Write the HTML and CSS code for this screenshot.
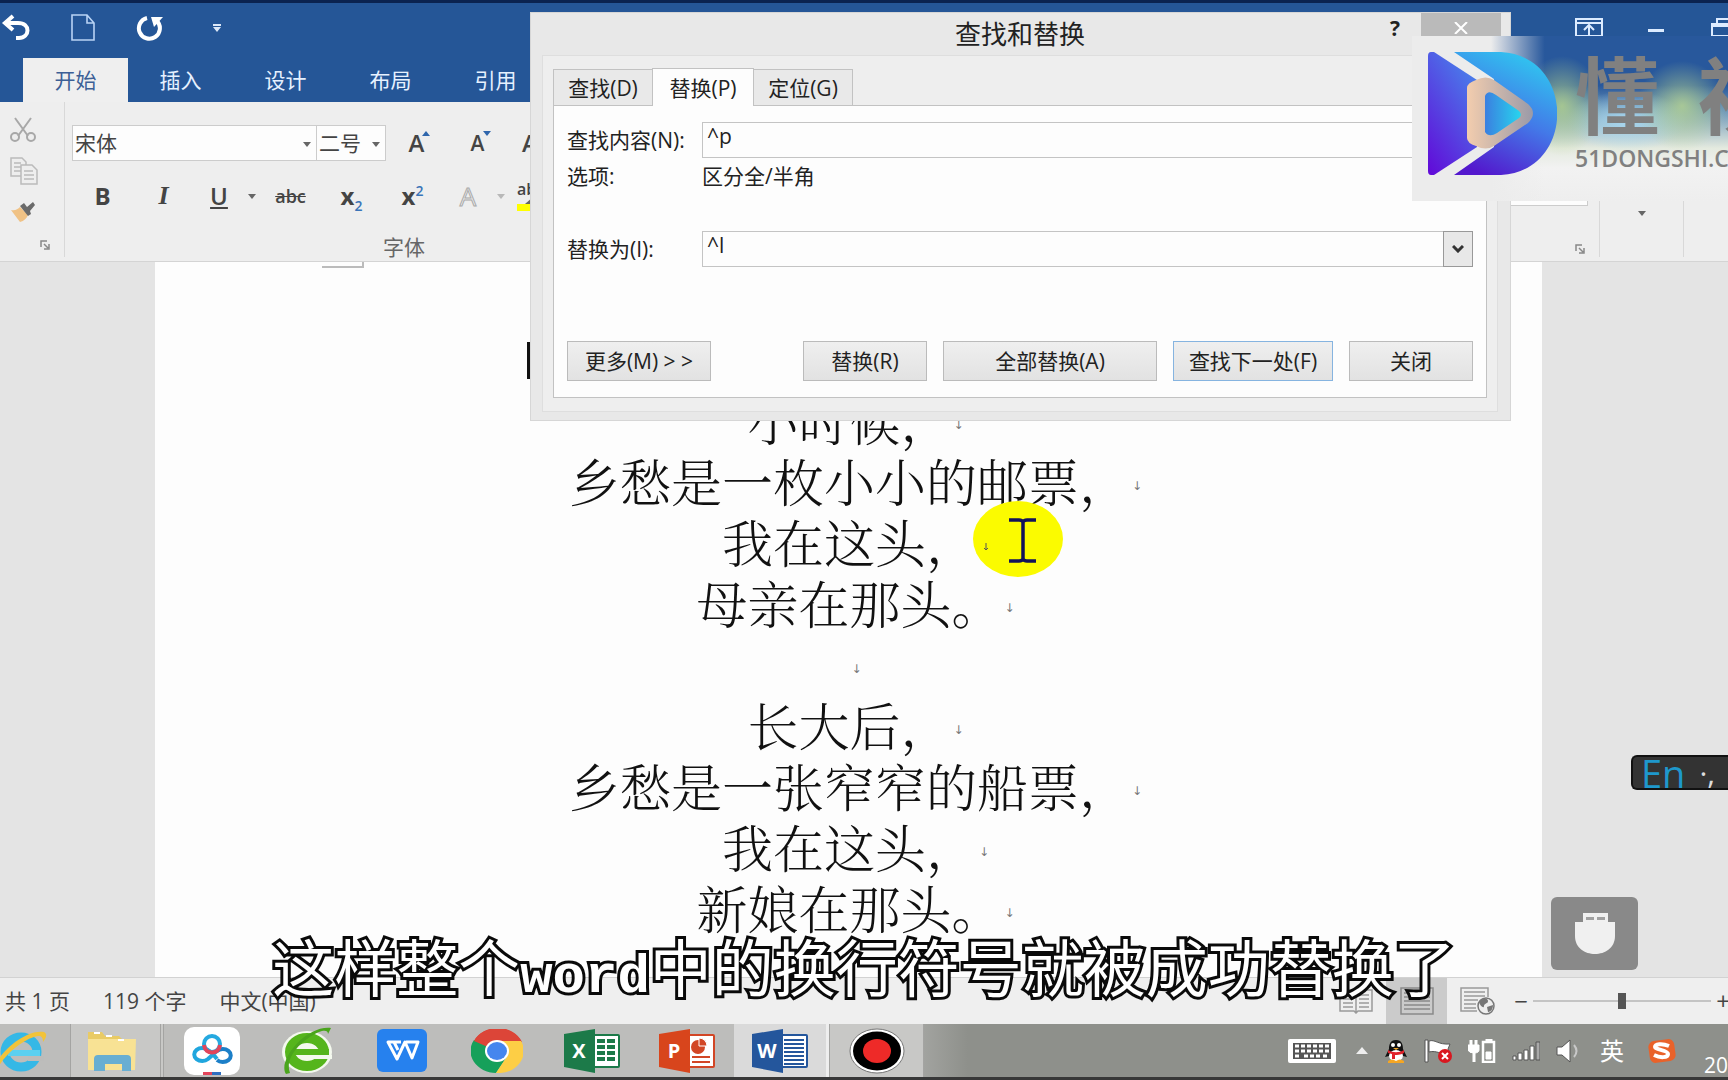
FILE: index.html
```html
<!DOCTYPE html>
<html lang="zh-CN">
<head>
  <meta charset="UTF-8" />
  <meta name="viewport" content="width=device-width, initial-scale=1" />
  <title>查找和替换</title>
  <link rel="stylesheet" href="styles.css">
</head>
<body>
  <!-- Title bar -->
  <header class="titlebar">
    <div class="quick-access">
      <button aria-label="撤消"><svg width="30" height="28" viewBox="0 0 30 28" fill="none" stroke="#fff" stroke-width="4"><path d="M12 2 4 9l8 7M4 9h13c13 0 12 15 1 15h-3"/></svg></button>
      <button aria-label="新建"><svg width="24" height="28" viewBox="0 0 24 28" fill="none" stroke="#b9d3f5" stroke-width="1.6"><path d="M1 1h15l7 8v17H1zM16 1v8h7"/></svg></button>
      <button aria-label="重复"><svg width="28" height="28" viewBox="0 0 28 28" fill="none" stroke="#fff" stroke-width="4"><path d="M11 4a10.500 10.500 0 1 0 10 3"/><path d="M15 3h12l-9 10z" fill="#fff" stroke="none"/></svg></button>
      <button aria-label="自定义"><svg width="8" height="8" viewBox="0 0 8 8" fill="#dce8f8"><path d="M0 0h8v2H0zM0 3h8L4 8z"/></svg></button>
    </div>
    <div class="window-buttons">
      <button aria-label="功能区选项"><svg width="28" height="20" viewBox="0 0 28 20" fill="none" stroke="#dcebff" stroke-width="2"><path d="M1 1h26v17H1zM1 5h26M14 18V8M9 12l5-5 5 5"/></svg></button>
      <button aria-label="最小化"><svg width="16" height="20" viewBox="0 0 16 20" fill="#dcebff"><path d="M0 11h16v3H0z"/></svg></button>
      <button aria-label="还原"><svg width="24" height="20" viewBox="0 0 24 20" fill="none" stroke="#dcebff" stroke-width="2"><path d="M6 6V1h17v11h-5M1 6h17v12H1zM1 8h17"/></svg></button>
    </div>
  </header>
  <nav class="ribbon-tabs">
    <a href="#" class="active">开始</a>
    <a href="#">插入</a>
    <a href="#">设计</a>
    <a href="#">布局</a>
    <a href="#">引用</a>
  </nav>

  <!-- Ribbon -->
  <section class="ribbon">
    <div class="group clipboard">
      <button aria-label="剪切"><svg width="26" height="26" viewBox="0 0 26 26" fill="none" stroke="#a8a8a8" stroke-width="2"><path d="M5 1l13 18M21 1 8 19"/><circle cx="5" cy="20" r="4"/><circle cx="21" cy="20" r="4"/></svg></button>
      <button aria-label="复制"><svg width="28" height="28" viewBox="0 0 28 28" fill="#eee" stroke="#bbb" stroke-width="1.500"><path d="M1 1h11l4 4v14H1zM4 6h7M4 10h7M4 14h7"/><path d="M11 8h11l5 5v14H11zM14 14h9M14 18h10M14 22h10"/></svg></button>
      <button aria-label="格式刷"><svg width="26" height="22" viewBox="0 0 26 22"><path d="M1 9c4 1 7-1 9-3l8 8c-1 3-4 6-8 7z" fill="#f0c285"/><path d="m10 5 4-3 3 4 6-5 2 3-5 6 1 3-3 2z" fill="#6a6a6a"/></svg></button>
      <svg class="launcher" width="10" height="10" viewBox="0 0 10 10" fill="none" stroke="#888" stroke-width="1.500"><path d="M1 7V1h6M4 4l4 4M9 4v5H4"/></svg>
    </div>
    <div class="group font-group">
      <div class="font-row">
        <div class="pick font-name"><select aria-label="字体"><option>宋体</option></select></div>
        <div class="pick font-size"><select aria-label="字号"><option>二号</option></select></div>
        <button class="w60 grow">A<i class="up"></i></button>
        <button class="w60 shrink">A<i class="down"></i></button>
        <button class="w50 aa">Aa</button>
      </div>
      <div class="font-row tools">
        <button class="w60"><b>B</b></button>
        <button class="w60 italic">I</button>
        <button class="w50"><u>U</u></button>
        <i class="down"></i>
        <button class="w60 strike">abc</button>
        <button class="w60"><b>x</b><sub>2</sub></button>
        <button class="w60"><b>x</b><sup>2</sup></button>
        <button class="w50 outline">A</button>
        <i class="down pale"></i>
        <button class="highlight">ab<svg width="30" height="14" viewBox="0 0 30 14"><path d="m8 7 8-7h8v7z" fill="#666"/><path d="M0 7h30v7H0z" fill="#ff0"/></svg></button>
      </div>
      <div class="group-label">字体</div>
    </div>
    <div class="group styles-group">
      <div class="style-box"></div>
      <svg class="launcher" width="10" height="10" viewBox="0 0 10 10" fill="none" stroke="#888" stroke-width="1.500"><path d="M1 7V1h6M4 4l4 4M9 4v5H4"/></svg>
    </div>
    <div class="group edit-group"><i class="down"></i></div>
  </section>

  <!-- Document -->
  <main class="workspace">
    <article class="paper">
      <div class="ruler-tab"></div>
      <p>小时候，<span>↓</span></p>
      <p>乡愁是一枚小小的邮票，<span>↓</span></p>
      <p>我在这头，<span>↓</span></p>
      <p>母亲在那头。<span>↓</span></p>
      <p><span>↓</span></p>
      <p>长大后，<span>↓</span></p>
      <p>乡愁是一张窄窄的船票，<span>↓</span></p>
      <p>我在这头，<span>↓</span></p>
      <p>新娘在那头。<span>↓</span></p>
    </article>
  </main>

  <footer class="statusbar">
    <span>共 1 页</span>
    <span>119 个字</span>
    <span>中文(中国)</span>
    <div class="views">
      <button aria-label="阅读视图"><svg width="34" height="26" viewBox="0 0 34 26" fill="none" stroke="#9a9a9a" stroke-width="1.500"><path d="M1 2h14l2 2 2-2h14v21H19l-2 2-2-2H1zM17 4v21M4 7h10M4 11h10M4 15h10M4 19h10M20 7h10M20 11h10M20 15h10M20 19h10"/></svg></button>
      <button class="current" aria-label="页面视图"><svg width="34" height="28" viewBox="0 0 34 28" fill="none" stroke="#8a8a8a" stroke-width="1.500"><path d="M1 1h32v26H1zM4 6h26M4 10h26M4 14h26M4 18h26M4 22h26"/></svg></button>
      <button aria-label="Web 视图"><svg width="36" height="28" viewBox="0 0 36 28" fill="none" stroke="#9a9a9a" stroke-width="1.500"><path d="M28 10V1H1v23h16M4 5h21M4 9h21M4 13h14M4 17h12M4 21h12"/><circle cx="26" cy="19" r="8" fill="#eee" stroke="#777"/><path d="M19 15c4-5 9-4 9-1s-4 2-4 5-4 0-5-4zM27 20l6-2c0 5-3 7-5 7z" fill="#777" stroke="none"/></svg></button>
    </div>
    <div class="zoom">
      <button aria-label="缩小">−</button>
      <input type="range" min="0" max="100" value="50" aria-label="缩放">
      <button aria-label="放大">+</button>
    </div>
  </footer>

  <!-- Taskbar -->
  <div class="taskbar">
    <button class="first" aria-label="Internet Explorer"><svg width="54" height="46" viewBox="0 0 54 46"><ellipse cx="27" cy="24" rx="16" ry="15" fill="none" stroke="#35b8e6" stroke-width="9"/><path d="M14 22h32v6H14z" fill="#5bd0f0"/><path d="M34 28h16v5H34z" fill="#bcbcba"/><path d="M2 44C-4 32 30 0 50 4c4 2 2 6-1 10 0-6-3-7-9-5C24 14 6 32 2 44z" fill="#f2c33a"/></svg></button>
    <button class="folder" aria-label="文件资源管理器"><svg width="52" height="44" viewBox="0 0 52 44"><path d="M2 3h14l3 4h14l3 3h13v30H2z" fill="#e9cb65"/><path d="M2 10h48l-1 31H2z" fill="#f8e294"/><path d="M8 4h6M20 7h6M32 11h6" stroke="#fff" stroke-width="2"/><path d="M8 42V30q0-4 4-4h29q4 0 4 4v12h-9v-7H19v7z" fill="#68aed2"/></svg></button>
    <button aria-label="百度网盘"><svg width="56" height="48" viewBox="0 0 56 48"><rect width="56" height="48" rx="10" fill="#fff"/><g fill="none" stroke-width="4"><path d="M34 23 24 32a8 6.500 0 1 1 0-9l4 3 5 6" stroke="#20a6de"/><path d="M33 24a8 6.500 0 1 1 0 9" stroke="#1c7fc8"/><circle cx="28" cy="17" r="8" stroke="#25a9e0"/><path d="M20 18c1 10 15 10 16 0" stroke="#e2455b"/></g><path d="M19 45h9v3h-9z" fill="#e2455b"/><path d="M28 45h9v3h-9z" fill="#2f6fc0"/></svg></button>
    <button aria-label="浏览器"><svg width="52" height="48" viewBox="0 0 52 48"><ellipse cx="26" cy="25" rx="25" ry="21" fill="#f4f9ee"/><ellipse cx="26" cy="25" rx="17" ry="14" fill="none" stroke="#55b51c" stroke-width="10"/><path d="M14 22h34v6H14z" fill="#55b51c"/><path d="M33 28h18v4H33z" fill="#f4f9ee"/><path d="M5 47C-4 34 25-2 50 1l-3 6c0-4-4-4-9-2C20 13 3 31 9 46z" fill="#4aa51c"/></svg></button>
    <button aria-label="WPS"><svg width="50" height="43" viewBox="0 0 50 43"><rect width="50" height="43" rx="6" fill="#2681ee"/><path d="M24 13H11l9 17 8-17 7 16 6-16H29M17 13l4 8" fill="none" stroke="#fff" stroke-width="3" stroke-linejoin="round"/></svg></button>
    <button aria-label="Chrome"><svg width="52" height="44" viewBox="0 0 52 44"><path d="M26 22 3 12A26 22 0 0 1 51 13z" fill="#dc4538"/><path d="M26 22 3 11a26 22 0 0 0 22 33l12-18z" fill="#16a05a"/><path d="M26 12h24a26 22 0 0 1-25 32l12-18z" fill="#fdce45"/><path d="M26 22 3 12A26 22 0 0 1 50 12H26z" fill="#dc4538"/><ellipse cx="26" cy="22" rx="12" ry="11" fill="#fff"/><ellipse cx="26" cy="22" rx="10" ry="9" fill="#4586ee"/></svg></button>
    <button aria-label="Excel"><svg width="56" height="44" viewBox="0 0 56 44"><rect x="29" y="6" width="26" height="32" rx="1" fill="#fff" stroke="#1c7a49" stroke-width="2"/><path d="M33 10h8v4h-8zm10 0h8v4h-8zM33 16h8v4h-8zm10 0h8v4h-8zM33 22h8v4h-8zm10 0h8v4h-8zM33 28h8v4h-8zm10 0h8v4h-8z" fill="#1c7a49"/><path d="M0 5 31 0v44L0 38z" fill="#1c7a49"/><text x="15" y="29" class="app-letter">X</text></svg></button>
    <button aria-label="PowerPoint"><svg width="56" height="44" viewBox="0 0 56 44"><rect x="29" y="6" width="26" height="32" rx="1" fill="#fff" stroke="#d24625" stroke-width="2"/><circle cx="39" cy="18" r="7" fill="#d24625"/><path d="M40 17V9a8 8 0 0 1 8 8z" fill="#d24625" stroke="#fff"/><path d="M33 28h18M33 33h18" stroke="#d24625" stroke-width="2"/><path d="M0 5 31 0v44L0 38z" fill="#d8451c"/><text x="15" y="29" class="app-letter">P</text></svg></button>
    <button class="open" aria-label="Word"><svg width="56" height="44" viewBox="0 0 56 44"><rect x="29" y="6" width="26" height="32" rx="1" fill="#fff" stroke="#24569c" stroke-width="2"/><path d="M32 11h20M32 15h20M32 19h20M32 23h20M32 27h20M32 31h20M32 35h20" stroke="#24569c" stroke-width="2"/><path d="M0 5 31 0v44L0 38z" fill="#24569c"/><text x="15" y="29" class="app-letter">W</text></svg></button>
    <button class="running" aria-label="录屏"><svg width="56" height="46" viewBox="0 0 56 46"><ellipse cx="28" cy="23" rx="27" ry="22" fill="#fff" stroke="#777"/><ellipse cx="28" cy="23" rx="24" ry="19.500" fill="#000"/><ellipse cx="28" cy="23" rx="14" ry="12" fill="#ee2a28"/></svg></button>
    <div class="tray">
      <svg width="48" height="24" viewBox="0 0 48 24"><rect width="48" height="24" rx="2" fill="#fff"/><rect x="5" y="4" width="38" height="16" fill="#555"/><path d="M7 7h34M7 12h34M7 17h6M16 17h16M35 17h6" stroke="#fff" stroke-width="3" stroke-dasharray="4 2"/></svg>
      <svg width="12" height="7" viewBox="0 0 12 7"><path d="M0 7 6 0l6 7z" fill="#eee"/></svg>
      <svg width="24" height="24" viewBox="0 0 24 24"><path d="M12 1c6 0 7 5 7 9l4 8-4-1-2 5H7l-2-5-4 1 4-8c0-4 1-9 7-9z" fill="#111"/><ellipse cx="12" cy="17" rx="7" ry="6" fill="#fff"/><circle cx="9" cy="6" r="2" fill="#fff"/><circle cx="15" cy="6" r="2" fill="#fff"/><path d="M9 9h6l-3 2z" fill="#f5a623"/><path d="M4 11c5 3 11 3 16 0v3c-4 2-7 2-9 2v4H8v-5l-4-1z" fill="#e0222a"/><path d="M4 22q4-3 8 0 4-3 8 0v2H4z" fill="#f5a623"/></svg>
      <svg width="28" height="24" viewBox="0 0 28 24"><path d="M1 1h3v22H1zM5 2c6-2 9 4 21 3l-2 5 2 4c-10 2-13-3-21-1z" fill="#fff" stroke="#555"/><circle cx="21" cy="17" r="7" fill="#d9171f"/><path d="m18 14 6 6m0-6-6 6" stroke="#fff" stroke-width="2"/></svg>
      <svg width="28" height="24" viewBox="0 0 28 24" fill="none" stroke="#fff"><path d="M3 1v6M8 1v6M6 13v10" stroke-width="3"/><path d="M0 6h11v5q0 3-5 3t-6-3z" fill="#fff"/><rect x="15" y="3" width="11" height="20" stroke-width="2.500"/><path d="M18 0h6v2h-6zM18 13h5v7h-5z" fill="#fff"/></svg>
      <svg width="28" height="20" viewBox="0 0 28 20" fill="#fff" stroke="#555"><path d="M1 15h3v4H1zM6 12h4v7H6zM12 9h4v10h-4zM18 5h4v14h-4z"/><path d="M24 1h4v18h-4z" fill="#aaa"/></svg>
      <svg width="24" height="24" viewBox="0 0 24 24"><path d="M1 8h5l8-7v22l-8-7H1z" fill="#fff" stroke="#555"/><path d="M18 6q5 6 0 12" fill="none" stroke="#c8c8c8" stroke-width="2"/></svg>
      <span class="ime">英</span>
      <svg width="28" height="24" viewBox="0 0 28 24"><rect x="1" y="1" width="26" height="22" rx="6" fill="#e9622a" transform="rotate(-8 14 12)"/><path d="M21 7c-7-3-14-2-14 1s13 3 13 7-8 4-14 1" fill="none" stroke="#fff" stroke-width="4"/></svg>
      <span class="clock">20</span>
    </div>
  </div>

  <!-- Find and replace dialog -->
  <section class="dialog">
    <div class="dialog-title">
      <h2>查找和替换</h2>
      <button class="help">?</button>
      <button class="close" aria-label="关闭窗口"><svg width="14" height="12" viewBox="0 0 14 12" stroke="#fff" stroke-width="2"><path d="m1 0 12 12M13 0 1 12"/></svg></button>
    </div>
    <div class="dialog-body">
      <div class="dialog-tabs">
        <button>查找(D)</button>
        <button class="active">替换(P)</button>
        <button>定位(G)</button>
      </div>
      <form class="panel">
        <div class="field">
          <label for="find">查找内容(N):</label>
          <input id="find" type="text" value="^p">
        </div>
        <div class="options"><span>选项:</span><span>区分全/半角</span></div>
        <div class="field">
          <label for="replace">替换为(I):</label>
          <input id="replace" type="text" value="^l">
          <button type="button" class="drop" aria-label="展开"><svg width="12" height="8" viewBox="0 0 12 8" fill="none" stroke="#333" stroke-width="3"><path d="m1 1 5 5 5-5"/></svg></button>
        </div>
        <div class="actions">
          <button type="button" class="more">更多(M) &gt; &gt;</button>
          <button type="button">替换(R)</button>
          <button type="button" class="all">全部替换(A)</button>
          <button type="button" class="next">查找下一处(F)</button>
          <button type="button">关闭</button>
        </div>
      </form>
    </div>
  </section>

  <!-- Things floating over the document -->
  <div class="caret"></div>
  <svg class="pointer" width="90" height="76" viewBox="0 0 90 76"><ellipse cx="45" cy="38" rx="45" ry="38" fill="#fbfb00"/><path d="M36 19h10q3 0 4 2 1-2 4-2h9M36 60h10q3 0 4-2 1 2 4 2h9M50 20v40" fill="none" stroke="#12125a" stroke-width="3.500"/><path d="M13 42v7m-2-2 2 2 2-2" stroke="#555" fill="none"/></svg>
  <div class="ime-bar"><span>En</span><em>·,</em></div>
  <div class="usb"><svg width="40" height="41" viewBox="0 0 40 41"><path d="M8 0h25v9h7v14c0 24-40 24-40 0V9h8z" fill="#f0f0f0"/><path d="M11 4h8v3h-8zM22 4h8v3h-8z" fill="#a0a0a0"/></svg></div>

  <div class="watermark">
    <svg width="129" height="123" viewBox="0 0 129 123">
      <defs>
        <linearGradient id="left" x1="0" y1="1" x2="0.6" y2="0"><stop offset="0" stop-color="#6208d8"/><stop offset="1" stop-color="#4a7bea"/></linearGradient>
        <linearGradient id="right" x1="0.3" y1="1" x2="0.7" y2="0"><stop offset="0" stop-color="#5318cd"/><stop offset="0.500" stop-color="#4379e8"/><stop offset="1" stop-color="#2fc8f0"/></linearGradient>
        <linearGradient id="ring"><stop offset="0" stop-color="#f3cdae"/><stop offset="1" stop-color="#9a9aa8"/></linearGradient>
        <linearGradient id="play"><stop offset="0" stop-color="#3b7fe0"/><stop offset="1" stop-color="#27d5ee"/></linearGradient>
      </defs>
      <path d="M3 0h3l43 28v67L6 123H3q-3 0-3-4V4q0-4 3-4z" fill="url(#left)"/>
      <path d="M26 0h47c75 4 75 119 0 123H26l40-28V27z" fill="url(#right)"/>
      <path d="M48 28q10-5 18 0l34 24q10 9 0 19L66 94q-8 5-18 0-9-3-9-8V36q0-5 9-8z" fill="url(#ring)"/>
      <path d="M57 44q3-7 11-1l23 16q4 4 0 7L69 81q-8 5-12-1z" fill="url(#play)"/>
    </svg>
    <div class="brand">
      <div class="brand-name"><span>懂</span><span>视</span></div>
      <div class="brand-url">51DONGSHI.COM</div>
    </div>
  </div>

  <div class="subtitle">这样整个<span>word</span>中的换行符号就被成功替换了</div>
</body>
</html>
```
FILE: styles.css
```css
* {
  margin: 0;
  padding: 0;
  box-sizing: border-box;
}

body {
  position: relative;
  display: flex;
  flex-direction: column;
  height: 100vh;
  overflow: hidden;
  background: #e4e4e4;
  color: #444;
  font: 21px/24px "Open Sans", "Noto Sans CJK SC", sans-serif;
}

button, input, select {
  font: inherit;
  color: inherit;
  border: 0;
  background: none;
}

svg {
  display: block;
  flex: none;
}

/* Title bar */
.titlebar {
  display: flex;
  justify-content: space-between;
  align-items: center;
  height: 58px;
  padding-bottom: 5px;
  border-top: 3px solid #0b2350;
  background: #255697;
}

.quick-access,
.window-buttons {
  display: flex;
}

.quick-access {
  margin-left: -18px;
}

.quick-access button,
.window-buttons button {
  display: flex;
  justify-content: center;
  align-items: center;
  width: 67px;
}

.window-buttons {
  margin-right: -28px;
}

.ribbon-tabs {
  display: flex;
  height: 44px;
  padding-left: 23px;
  background: #255697;
}

.ribbon-tabs a {
  width: 105px;
  color: #e6f1ff;
  line-height: 44px;
  text-align: center;
  text-decoration: none;
}

.ribbon-tabs .active {
  background: #efefef;
  color: #3c5f96;
}

/* Ribbon */
.ribbon {
  display: flex;
  height: 160px;
  background: #eee;
  border-bottom: 1px solid #d4d4d4;
}

.group {
  border-right: 1px solid #d8d8d8;
  margin-bottom: 4px;
}

.clipboard {
  display: flex;
  flex-direction: column;
  width: 65px;
  padding: 7px 0;
}

.clipboard button {
  display: flex;
  align-items: center;
  height: 41px;
  padding-left: 10px;
}

.launcher {
  margin: auto 14px 0 auto;
}

.font-group {
  width: 672px;
  padding: 23px 0 0 7px;
}

.font-row {
  display: flex;
  align-items: center;
  height: 36px;
}

.tools {
  height: 40px;
  margin: 15px 0 16px;
}

.pick {
  position: relative;
  height: 36px;
  background: #fdfdfd;
  border: 1px solid #ccc;
}

.pick select {
  width: 100%;
  height: 100%;
  padding-left: 2px;
  appearance: none;
}

.pick::after,
.down {
  border: 4px solid transparent;
  border-top: 5px solid #666;
  border-bottom: 0;
  content: "";
}

.pick::after {
  position: absolute;
  top: 16px;
  right: 5px;
}

.font-name {
  width: 245px;
}

.font-size {
  width: 70px;
  margin-left: -1px;
}

.w50 {
  width: 50px;
}

.w60 {
  width: 61px;
}

.grow,
.shrink {
  position: relative;
  font-weight: 600;
}

.grow {
  font-size: 24px;
}

.shrink .down,
.grow .up {
  position: absolute;
  top: 0;
  left: 36px;
  border-top-color: #2f66ac;
}

.up {
  border: 4px solid transparent;
  border-bottom: 5px solid #2f66ac;
  border-top: 0;
}

.aa {
  padding-left: 8px;
  font-weight: 600;
  font-size: 24px;
}

.tools > .down {
  margin: 0 4px;
}

.tools button {
  font-size: 24px;
  white-space: nowrap;
}

.tools .italic {
  font: italic bold 26px "Liberation Serif", serif;
}

.tools u {
  font-weight: 600;
}

.tools .strike {
  font-size: 18px;
  font-weight: 600;
  text-decoration: line-through;
}

.tools sub,
.tools sup {
  color: #3a74b8;
  font-size: 14px;
  font-weight: 600;
  line-height: 0;
}

.tools .outline {
  color: #eee;
  font-size: 26px;
  -webkit-text-stroke: 1px #aaa;
}

.pale {
  opacity: 0.4;
}

.tools .highlight {
  margin-left: 8px;
  font-size: 16px;
  font-weight: 600;
  line-height: 16px;
  text-align: left;
}

.group-label {
  color: #666;
  line-height: 30px;
  text-align: center;
}

.styles-group {
  display: flex;
  flex-direction: column;
  width: 120px;
  margin-left: auto;
  padding-bottom: 3px;
}

.style-box {
  width: 108px;
  height: 104px;
  background: #fdfdfd;
  border: 1px solid #ccc;
}

.edit-group {
  display: flex;
  justify-content: center;
  width: 84px;
  margin-right: 44px;
  padding-top: 109px;
}

/* Document */
.workspace {
  flex: 1;
  min-height: 0;
  padding: 0 186px 0 155px;
}

.paper {
  position: relative;
  height: 100%;
  padding: 127px 0 0 16px;
  overflow: hidden;
  background: #fdfdfd;
  color: #111;
  font: 300 51px/61px "Noto Serif CJK SC", "Noto Sans CJK SC", serif;
  text-align: center;
}

.paper p {
  height: 61px;
  white-space: nowrap;
}

.paper span {
  display: inline-block;
  width: 14px;
  color: #777;
  font: 12px/20px "DejaVu Sans", sans-serif;
  vertical-align: 12px;
}

.ruler-tab {
  position: absolute;
  top: 0;
  left: 167px;
  width: 42px;
  height: 6px;
  border: solid #bbb;
  border-width: 0 2px 2px 0;
}

/* Status bar */
.statusbar {
  display: flex;
  align-items: center;
  gap: 33px;
  height: 47px;
  padding-left: 5px;
  border-top: 1px solid #d2d2d2;
  background: #efefef;
}

.views {
  display: flex;
  align-self: stretch;
  margin-left: auto;
}

.views button {
  display: flex;
  justify-content: center;
  align-items: center;
  width: 61px;
}

.views .current {
  background: #cbcbcb;
}

.zoom {
  display: flex;
  align-items: center;
  gap: 4px;
  margin-left: -28px;
  margin-right: -3px;
}

.zoom button {
  width: 16px;
  font-size: 24px;
}

.zoom input {
  width: 178px;
  height: 18px;
  appearance: none;
  background: linear-gradient(#c4c4c4, #c4c4c4) center / 100% 2px no-repeat;
}

.zoom input::-webkit-slider-thumb {
  width: 8px;
  height: 16px;
  appearance: none;
  background: #555;
}

/* Taskbar */
.taskbar {
  display: flex;
  height: 56px;
  border-bottom: 3px solid #383838;
  background: linear-gradient(90deg, #bdbdbb, #bdbdbb 50%, #8e908b 56%, #8e908b);
}

.taskbar button {
  display: flex;
  justify-content: center;
  align-items: center;
  width: 95px;
}

.taskbar .first {
  width: 70px;
  padding-right: 28px;
}

.taskbar .folder,
.taskbar .running {
  background: #c8c8c6;
  border: 1px solid #a4a4a2;
  border-width: 0 1px;
}

.taskbar .folder {
  width: 94px;
  padding-right: 8px;
  border-right: 4px double #a4a4a2;
}

.taskbar .open {
  background: #dadada;
  border-right: 3px solid #eee;
}

.app-letter {
  fill: #fff;
  font: bold 20px "Open Sans", sans-serif;
  text-anchor: middle;
}

.tray {
  display: flex;
  align-items: center;
  gap: 16px;
  margin-left: auto;
  color: #fff;
}

.tray svg:first-child {
  margin-right: 4px;
}

.ime {
  margin: 0 8px 0 4px;
  font-size: 24px;
}

.clock {
  align-self: flex-end;
  margin-left: 12px;
}

/* Dialog */
.dialog {
  position: absolute;
  top: 12px;
  left: 530px;
  width: 981px;
  padding: 0 12px 8px 11px;
  border: 1px solid #d6d6d6;
  background: #e8e8e8;
  color: #222;
}

.dialog-title {
  position: relative;
  height: 42px;
}

.dialog-title h2 {
  font-size: 26px;
  font-weight: 400;
  line-height: 42px;
  text-align: center;
}

.help,
.close {
  position: absolute;
  top: 0;
}

.help {
  right: 98px;
  height: 30px;
  font-weight: 700;
}

.close {
  right: -3px;
  display: flex;
  justify-content: center;
  align-items: center;
  width: 80px;
  height: 30px;
  background: #bababa;
}

.dialog-body {
  padding: 12px 10px 13px;
  border: 1px solid #dedede;
  background: #eee;
}

.dialog-tabs {
  display: flex;
  align-items: flex-end;
  height: 37px;
}

.dialog-tabs button {
  width: 100px;
  height: 36px;
  border: 1px solid #c2c2c2;
  border-bottom: 0;
  background: #e9e9e9;
}

.dialog-tabs .active {
  width: 102px;
  height: 38px;
  margin: 0 -1px -1px;
  background: #fdfdfd;
}

.panel {
  height: 293px;
  padding: 16px 13px;
  border: 1px solid #c2c2c2;
  background: #fdfdfd;
}

.field {
  display: flex;
  height: 36px;
}

.field label,
.options span:first-child {
  width: 135px;
  line-height: 36px;
}

.field input {
  flex: 1;
  padding: 0 4px 8px;
  border: 1px solid #c4c4c4;
  background: #fdfdfd;
}

.options {
  display: flex;
  height: 73px;
}

.options span {
  line-height: 36px;
}

.drop {
  display: flex;
  justify-content: center;
  align-items: center;
  width: 30px;
  margin-left: -1px;
  border: 1px solid #999;
  background: #e8e8e8;
}

.actions {
  display: flex;
  gap: 16px;
  margin-top: 74px;
}

.actions button {
  width: 124px;
  height: 40px;
  border: 1px solid #bbb;
  background: linear-gradient(#efefef, #e2e2e2);
}

.actions .more {
  width: 144px;
  margin-right: auto;
}

.actions .all {
  width: 214px;
}

.actions .next {
  width: 160px;
  border-color: #86b4e0;
}

/* Overlays */
.caret {
  position: absolute;
  top: 342px;
  left: 527px;
  width: 3px;
  height: 37px;
  background: #111;
}

.pointer {
  position: absolute;
  top: 501px;
  left: 973px;
}

.ime-bar {
  position: absolute;
  top: 755px;
  right: 0;
  display: flex;
  gap: 14px;
  width: 97px;
  height: 35px;
  padding-left: 8px;
  border: 2px solid #111;
  border-right: 0;
  border-radius: 6px 0 0 6px;
  background: #333;
  color: #1e98cc;
  font: 38px/32px "Open Sans", sans-serif;
  overflow: hidden;
}

.ime-bar em {
  color: #ddd;
  font-size: 30px;
  font-style: normal;
}

.usb {
  position: absolute;
  right: 90px;
  bottom: 110px;
  display: flex;
  justify-content: center;
  align-items: center;
  width: 87px;
  height: 73px;
  border-radius: 6px;
  background: #898989;
}

.watermark {
  position: absolute;
  top: 36px;
  right: 0;
  display: flex;
  gap: 18px;
  width: 316px;
  height: 165px;
  padding: 16px 0 0 16px;
  overflow: hidden;
  color: #808080;
  background:
    radial-gradient(ellipse 40px 50px at 150px 70px, #b5d38acc, transparent),
    radial-gradient(ellipse 45px 45px at 270px 70px, #b9d690cc, transparent),
    radial-gradient(ellipse 60px 30px at 215px 85px, #a8d8f0, transparent),
    linear-gradient(90deg, #ececec 25%, #ececec00 42%),
    linear-gradient(#28589c 30%, #6d97b8 45%, #e4eadf 68%, #f2f2f2 80%, #eee);
}

.brand-name {
  display: flex;
  gap: 38px;
  font: 700 84px/80px "Noto Sans CJK SC", sans-serif;
}

.brand-url {
  margin-top: 14px;
  font: 600 23px/24px "Open Sans", sans-serif;
}

.subtitle {
  position: absolute;
  right: 0;
  bottom: 62px;
  left: 0;
  color: #fff;
  font: 400 62px/80px "Noto Sans CJK SC", sans-serif;
  text-align: center;
  white-space: nowrap;
  -webkit-text-stroke: 6px #0a0a0a;
  paint-order: stroke fill;
}

.subtitle span {
  font: bold 54px/80px "Liberation Mono", monospace;
}
```
